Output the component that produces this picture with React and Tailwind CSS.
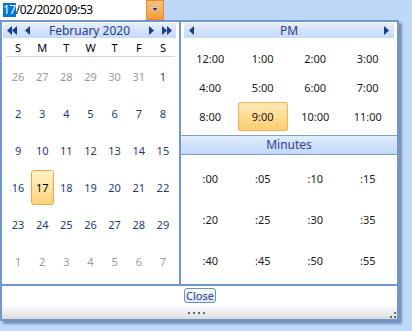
import React from "react";

const prevDays = [26, 27, 28, 29, 30, 31];
const nextDays = [1, 2, 3, 4, 5, 6, 7];
const hours = ["12:00", "1:00", "2:00", "3:00", "4:00", "5:00", "6:00", "7:00", "8:00", "9:00", "10:00", "11:00"];
const minutes = [":00", ":05", ":10", ":15", ":20", ":25", ":30", ":35", ":40", ":45", ":50", ":55"];

// one triangle, pointing left or right
function Tri({ dir = "left" }) {
  return (
    <svg width="5" height="9" viewBox="0 0 5 9" className="block">
      {dir === "left" ? <path d="M5 0 L0 4.5 L5 9 Z" fill="#1d3d8c" /> : <path d="M0 0 L5 4.5 L0 9 Z" fill="#1d3d8c" />}
    </svg>
  );
}

function Header({ children, className = "" }) {
  return (
    <div className={"flex items-center h-[17px] border border-white bg-gradient-to-b from-[#e6effc] via-[#d3e3fa] to-[#c4dafa] text-[#23408f] " + className}>
      {children}
    </div>
  );
}

export default function App() {
  const cells = [];
  prevDays.forEach((d) => cells.push({ d, muted: true }));
  for (let i = 1; i <= 29; i++) cells.push({ d: i, muted: false });
  nextDays.forEach((d) => cells.push({ d, muted: true }));

  return (
    <div className="w-[412px] h-[331px] bg-[#bfd8fa] font-['Noto_Sans',sans-serif] text-[11px] leading-none">
      {/* input + dropdown button */}
      <div className="flex w-[164px] h-[20px] bg-white">
        <div className="flex-1 flex items-center pl-[3px] text-[12px] tracking-[-0.5px] text-black">
          <span className="bg-[#0078d7] text-white leading-[14px]">17</span>
          <span>/02/2020 09:53</span>
        </div>
        <div className="w-[18px] h-[20px] border border-[#e48c32] bg-gradient-to-b from-[#fcc27c] to-[#f69a3c] flex items-center justify-center">
          <svg width="8" height="6" viewBox="0 0 8 6">
            <path d="M0.5 0.5 L7.5 0.5 L4 4.5 Z" fill="#1d3d8c" stroke="#ffffff" strokeWidth="0.6" />
          </svg>
        </div>
      </div>

      {/* popup */}
      <div className="w-[399px] h-[301px] border-2 border-[#6f97cc] bg-white shadow-[3px_3px_2px_rgba(40,60,100,0.45)] flex flex-col">
        <div className="flex h-[262px]">
          {/* calendar */}
          <div className="w-[177px] flex flex-col">
            <Header className="mr-[2px] px-[4px]">
              <div className="flex"><Tri /><Tri /></div>
              <div className="ml-[8px]"><Tri /></div>
              <div className="flex-1 text-center text-[12px]">February 2020</div>
              <div className="mr-[8px]"><Tri dir="right" /></div>
              <div className="flex"><Tri dir="right" /><Tri dir="right" /></div>
            </Header>
            <div className="mx-[4px] grid grid-cols-7 h-[18px] items-center border-b border-[#ccd9ea] text-black text-[11px]">
              {["S", "M", "T", "W", "T", "F", "S"].map((n, i) => (
                <div key={i} className="text-center">{n}</div>
              ))}
            </div>
            <div className="mx-[4px] grid grid-cols-7 grid-rows-6 h-[222px] mt-[1px]">
              {cells.map((c, i) => (
                <div key={i} className="flex items-center justify-center">
                  {c.d === 17 && !c.muted ? (
                    <div className="w-[23px] h-[35px] flex items-center justify-center rounded-[3px] border border-[#f4a14f] bg-gradient-to-b from-[#fff1c6] to-[#fed37a] text-black">
                      17
                    </div>
                  ) : (
                    <span className={c.muted ? "text-[#9f9a9a]" : "text-[#1f3c78]"}>{c.d}</span>
                  )}
                </div>
              ))}
            </div>
          </div>

          <div className="w-[2px] bg-[#6f97cc]" />

          {/* time */}
          <div className="flex-1 flex flex-col">
            <Header className="mx-[2px] px-[5px]">
              <Tri />
              <div className="flex-1 text-center text-[12px]">PM</div>
              <Tri dir="right" />
            </Header>
            <div className="mx-[3px] mt-[5px] grid grid-cols-4 auto-rows-[29px] text-[#1a1a1a]">
              {hours.map((h) => (
                <div key={h} className="flex items-center justify-center">
                  {h === "9:00" ? (
                    <div className="w-[50px] h-[29px] flex items-center justify-center rounded-[2px] border border-[#f4b25e] bg-gradient-to-b from-[#ffe9b4] to-[#fdcd6e]">
                      9:00
                    </div>
                  ) : (
                    h
                  )}
                </div>
              ))}
            </div>
            <div className="mt-[4px] h-[20px] flex items-center justify-center border-y border-[#7ca1d4] bg-gradient-to-b from-[#e3edfc] via-[#cfe1fb] to-[#c3d9fa] text-[12px] text-[#33409a]">
              Minutes
            </div>
            <div className="mx-[3px] mt-[3px] grid grid-cols-4 auto-rows-[41px] text-[#1a1a1a]">
              {minutes.map((m) => (
                <div key={m} className="flex items-center justify-center">{m}</div>
              ))}
            </div>
          </div>
        </div>

        <div className="h-[2px] bg-[#6f97cc]" />

        {/* footer */}
        <div className="h-[20px] pl-[182px] pt-[2px]">
          <button className="h-[15px] w-[32px] rounded-[3px] border border-[#7190c0] bg-gradient-to-b from-[#fbfdff] to-[#dbe7f7] text-[11px] leading-none text-[#1e3f7f]">
            Close
          </button>
        </div>

        {/* grip */}
        <div className="flex-1 relative bg-gradient-to-b from-[#fbfbfb] to-[#dcdcdc]">
          <div className="flex gap-[3px] absolute left-[186px] top-[6px]">
            {[0, 1, 2, 3].map((i) => (
              <div key={i} className="w-[2px] h-[2px] bg-[#5f6b80]" />
            ))}
          </div>
          <svg className="absolute right-[1px] bottom-[1px]" width="6" height="6" viewBox="0 0 6 6">
            <rect x="4" y="0" width="2" height="2" fill="#5f6b80" />
            <rect x="0" y="4" width="2" height="2" fill="#5f6b80" />
            <rect x="4" y="4" width="2" height="2" fill="#5f6b80" />
          </svg>
        </div>
      </div>
    </div>
  );
}
